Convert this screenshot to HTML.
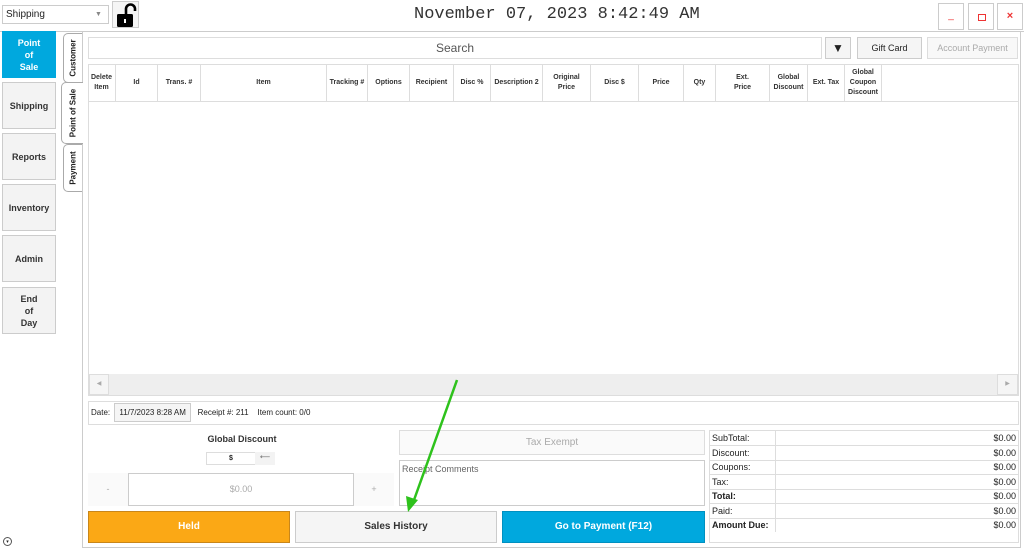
<!DOCTYPE html>
<html><head><style>
*{box-sizing:border-box;margin:0;padding:0}
body{width:1024px;height:549px;background:#fff;font-family:"Liberation Sans",sans-serif;position:relative;overflow:hidden;color:#222}
.a{position:absolute}
.nav{position:absolute;left:2px;width:54px;height:47px;background:#f3f3f3;border:1px solid #ccc;font-size:9px;font-weight:bold;color:#333;display:flex;align-items:center;justify-content:center;text-align:center;line-height:12px}
.th{position:absolute;top:65px;height:36px;border-right:1px solid #ddd;font-size:7px;font-weight:bold;display:flex;align-items:center;justify-content:center;text-align:center;line-height:10px;color:#333}
.tab{position:absolute;left:63px;width:19px;border:1px solid #aaa;border-right:none;border-radius:5px 0 0 5px;background:#fff;font-size:8px;font-weight:bold}
.tab span{position:absolute;left:50%;top:50%;transform:translate(-50%,-50%) rotate(-90deg);white-space:nowrap}
.tr{position:absolute;left:710px;width:309px;height:14.6px;border-bottom:1px solid #ddd;font-size:9px;line-height:14px}
.tr b,.tr i{font-style:normal}
.tr .l{position:absolute;left:2px}
.tr .v{position:absolute;right:3px}
</style></head><body>
<div class="a" style="left:2px;top:5px;width:107px;height:19px;border:1px solid #ccc;font-size:10px;line-height:17px;padding-left:3px">Shipping<span class="a" style="left:92px;top:0;font-size:7px;color:#888">▼</span></div>
<div class="a" style="left:112px;top:1px;width:27px;height:27px;border:1px solid #ccc;background:#f5f5f5">
<svg width="27" height="27" viewBox="0 0 27 27"><path d="M13 12V7a4.5 4.5 0 0 1 9 0v2" stroke="#000" stroke-width="2.6" fill="none"/><rect x="4" y="12" width="16" height="13" rx="1.5" fill="#000"/><rect x="11" y="17" width="2" height="4" fill="#fff"/></svg></div>
<div class="a" style="left:414px;top:5px;font-family:'Liberation Mono',monospace;font-size:17px;color:#333">November 07, 2023 8:42:49 AM</div>
<div class="a" style="left:938px;top:3px;width:26px;height:27px;border:1px solid #ccc;color:#e33;font-size:10px;text-align:center;line-height:24px">_</div>
<div class="a" style="left:968px;top:3px;width:26px;height:27px;border:1px solid #ccc;"><div class="a" style="left:9px;top:10px;width:8px;height:7px;border:1px solid #e33"></div></div>
<div class="a" style="left:997px;top:3px;width:26px;height:27px;border:1px solid #ccc;color:#e33;font-size:11px;text-align:center;line-height:25px;font-weight:bold">×</div>
<div class="a" style="left:0;top:31px;width:1024px;height:1px;background:#ccc"></div>

<div class="nav" style="top:31px;background:#00a8de;border-color:#00a8de;color:#fff">Point<br>of<br>Sale</div>
<div class="nav" style="top:82px">Shipping</div>
<div class="nav" style="top:133px">Reports</div>
<div class="nav" style="top:184px">Inventory</div>
<div class="nav" style="top:235px">Admin</div>
<div class="nav" style="top:287px">End<br>of<br>Day</div>
<div class="a" style="left:3px;top:537px;width:9px;height:9px;border:1px solid #555;border-radius:50%;font-size:5px;text-align:center;line-height:8px">▾</div>

<div class="a" style="left:82px;top:31px;width:939px;height:517px;border:1px solid #ccc"></div>
<div class="tab" style="top:33px;height:50px"><span>Customer</span></div>
<div class="tab" style="top:82px;height:62px;left:61px;width:22px;background:#fff;z-index:2"><span>Point of Sale</span></div>
<div class="tab" style="top:144px;height:48px"><span>Payment</span></div>

<div class="a" style="left:88px;top:37px;width:734px;height:22px;border:1px solid #ddd;font-size:12px;color:#555;text-align:center;line-height:20px">Search</div>
<div class="a" style="left:825px;top:37px;width:26px;height:22px;border:1px solid #ccc;background:#f5f5f5;font-size:12px;text-align:center;line-height:20px">▼</div>
<div class="a" style="left:857px;top:37px;width:65px;height:22px;border:1px solid #ccc;background:#f5f5f5;font-size:9px;text-align:center;line-height:20px">Gift Card</div>
<div class="a" style="left:927px;top:37px;width:91px;height:22px;border:1px solid #ddd;background:#f8f8f8;font-size:9px;color:#aaa;text-align:center;line-height:20px">Account Payment</div>

<div class="a" style="left:88px;top:64px;width:931px;height:332px;border:1px solid #ddd"></div>
<div class="a" style="left:88px;top:101px;width:931px;height:1px;background:#ddd"></div>
<div class="th" style="left:88px;width:28px">Delete<br>Item</div>
<div class="th" style="left:116px;width:42px">Id</div>
<div class="th" style="left:158px;width:43px">Trans. #</div>
<div class="th" style="left:201px;width:126px">Item</div>
<div class="th" style="left:327px;width:41px">Tracking #</div>
<div class="th" style="left:368px;width:42px">Options</div>
<div class="th" style="left:410px;width:44px">Recipient</div>
<div class="th" style="left:454px;width:37px">Disc %</div>
<div class="th" style="left:491px;width:52px">Description 2</div>
<div class="th" style="left:543px;width:48px">Original<br>Price</div>
<div class="th" style="left:591px;width:48px">Disc $</div>
<div class="th" style="left:639px;width:45px">Price</div>
<div class="th" style="left:684px;width:32px">Qty</div>
<div class="th" style="left:716px;width:54px">Ext.<br>Price</div>
<div class="th" style="left:770px;width:38px">Global<br>Discount</div>
<div class="th" style="left:808px;width:37px">Ext. Tax</div>
<div class="th" style="left:845px;width:37px">Global<br>Coupon<br>Discount</div>
<div class="a" style="left:89px;top:374px;width:929px;height:21px;background:#eee"></div>
<div class="a" style="left:89px;top:374px;width:20px;height:21px;border:1px solid #ddd;background:#f5f5f5;font-size:6px;color:#aaa;text-align:center;line-height:19px">◀</div>
<div class="a" style="left:997px;top:374px;width:21px;height:21px;border:1px solid #ddd;background:#f5f5f5;font-size:6px;color:#aaa;text-align:center;line-height:19px">▶</div>

<div class="a" style="left:88px;top:401px;width:931px;height:24px;border:1px solid #ddd;font-size:8px;line-height:22px;padding-left:2px">Date: <span style="display:inline-block;border:1px solid #ccc;background:#f5f5f5;padding:0 4px;line-height:17px;margin-left:2px">11/7/2023 8:28 AM</span> &nbsp; Receipt #: 211 &nbsp;&nbsp; Item count: 0/0</div>

<div class="a" style="left:88px;top:434px;width:308px;text-align:center;font-size:9px;font-weight:bold;color:#333">Global Discount</div>
<div class="a" style="left:206px;top:452px;width:69px;height:13px;border:1px solid #ddd;font-size:7px;font-weight:bold;line-height:11px"><span class="a" style="left:22px">$</span><span class="a" style="left:48px;top:-1px;width:20px;height:13px;background:#f3f3f3;color:#888;text-align:center">⟵</span></div>
<div class="a" style="left:88px;top:473px;width:40px;height:33px;background:#fafafa;color:#aaa;font-size:9px;text-align:center;line-height:33px">-</div>
<div class="a" style="left:128px;top:473px;width:226px;height:33px;border:1px solid #ccc;color:#aaa;font-size:9px;text-align:center;line-height:31px">$0.00</div>
<div class="a" style="left:354px;top:473px;width:40px;height:33px;background:#fafafa;color:#aaa;font-size:9px;text-align:center;line-height:33px">+</div>
<div class="a" style="left:399px;top:430px;width:306px;height:25px;border:1px solid #ddd;background:#fafafa;color:#aaa;font-size:10px;text-align:center;line-height:23px">Tax Exempt</div>
<div class="a" style="left:399px;top:460px;width:306px;height:46px;border:1px solid #ccc;color:#666;font-size:9px;padding:3px 2px">Receipt Comments</div>

<div class="a" style="left:88px;top:511px;width:202px;height:32px;background:#fba815;border:1px solid #c8861a;color:#fff;font-size:10px;font-weight:bold;text-align:center;line-height:30px">Held</div>
<div class="a" style="left:295px;top:511px;width:202px;height:32px;background:#f5f5f5;border:1px solid #ccc;color:#333;font-size:10px;font-weight:bold;text-align:center;line-height:30px">Sales History</div>
<div class="a" style="left:502px;top:511px;width:203px;height:32px;background:#00a8de;border:1px solid #0090c0;color:#fff;font-size:10px;font-weight:bold;text-align:center;line-height:30px">Go to Payment (F12)</div>

<div class="a" style="left:709px;top:430px;width:310px;height:113px;border:1px solid #ddd"></div>
<div class="a" style="left:775px;top:431px;width:1px;height:101px;background:#ddd"></div>
<div class="tr" style="top:431px"><span class="l">SubTotal:</span><span class="v">$0.00</span></div>
<div class="tr" style="top:446px"><span class="l">Discount:</span><span class="v">$0.00</span></div>
<div class="tr" style="top:460px"><span class="l">Coupons:</span><span class="v">$0.00</span></div>
<div class="tr" style="top:475px"><span class="l">Tax:</span><span class="v">$0.00</span></div>
<div class="tr" style="top:489px"><b class="l">Total:</b><span class="v">$0.00</span></div>
<div class="tr" style="top:504px"><span class="l">Paid:</span><span class="v">$0.00</span></div>
<div class="tr" style="top:518px;border:none"><b class="l">Amount Due:</b><span class="v">$0.00</span></div>

<svg class="a" style="left:0;top:0" width="1024" height="549"><line x1="457" y1="380" x2="414" y2="500" stroke="#2ec21c" stroke-width="2.5"/><path d="M408 512 L406 496 L418 500 Z" fill="#2ec21c"/></svg>
</body></html>
